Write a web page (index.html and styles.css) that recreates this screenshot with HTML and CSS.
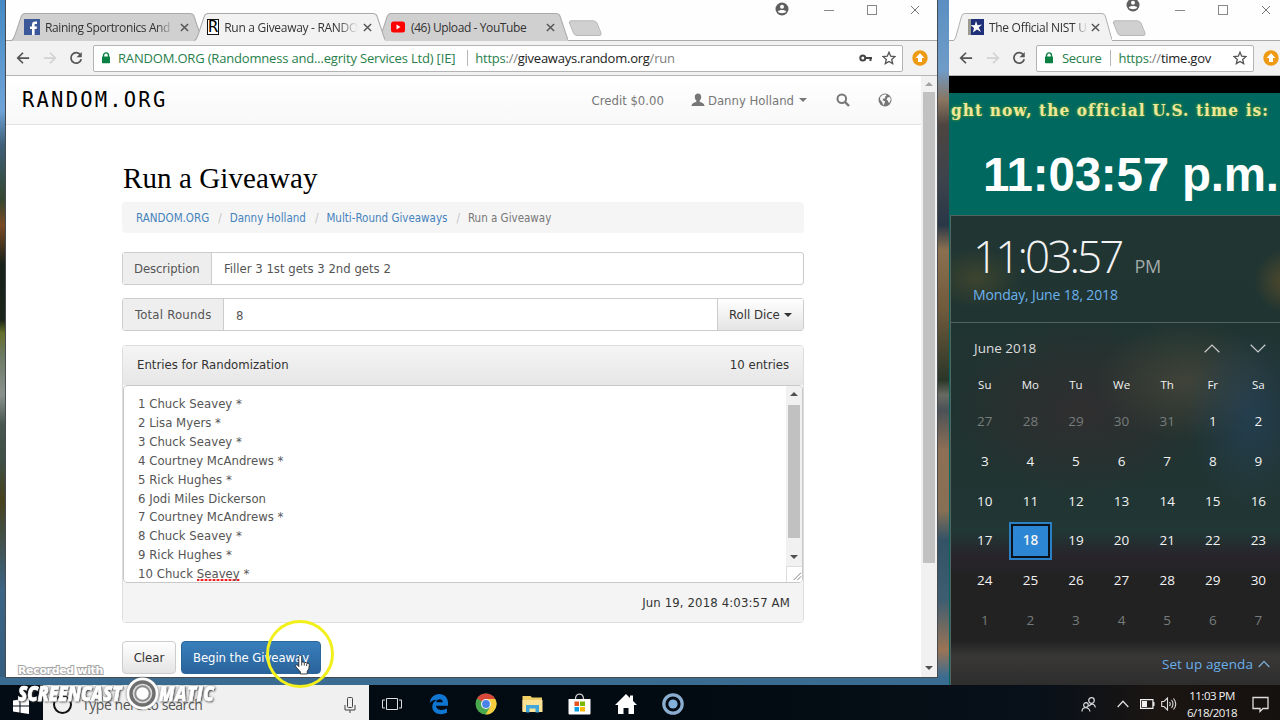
FILE: index.html
```html
<!DOCTYPE html>
<html lang="en">

<head>
    <meta charset="UTF-8">
    <title>Run a Giveaway - RANDOM.ORG</title>
    <link rel="stylesheet" href="styles.css">
</head>

<body>
    <!-- shared icons -->
    <svg class="defs">
        <symbol id="back" viewBox="0 0 16 16"><path d="M15 8H2M8 2L2 8l6 6" fill="none" stroke="currentColor" stroke-width="2"/></symbol>
        <symbol id="reload" viewBox="0 0 16 16"><path d="M13 4.2A6 6 0 1 0 14 9.5" fill="none" stroke="#555" stroke-width="2"/><path d="M14.6 1v6H8.6z" fill="#555"/></symbol>
        <symbol id="lock" viewBox="0 0 10 12"><path d="M2.5 5V3.4a2.5 2.5 0 0 1 5 0V5" fill="none" stroke="#0b8043" stroke-width="1.4"/><rect x="1" y="4.6" width="8" height="6.6" rx=".6" fill="#0b8043"/></symbol>
        <symbol id="star" viewBox="0 0 14 14"><path d="M7 1.2l1.7 4 4.3.4-3.3 2.8 1 4.2L7 10.4l-3.7 2.2 1-4.2L1 5.6l4.3-.4z" fill="none" stroke="#555" stroke-width="1.3"/></symbol>
        <symbol id="ext" viewBox="0 0 16 16"><circle cx="8" cy="8" r="7.7" fill="#ee9a12"/><path d="M8 3.3l4.5 4.8H10V12H6V8.1H3.5z" fill="#fff"/></symbol>
        <symbol id="user" viewBox="0 0 14 14"><circle cx="7" cy="7" r="6.5" fill="#5f5f5f"/><circle cx="7" cy="4.7" r="2" fill="#fff"/><path d="M2.8 9.5C4 7.5 10 7.5 11.2 9.5 10 11.8 4 11.8 2.8 9.5z" fill="#fff"/></symbol>
        <symbol id="cross" viewBox="0 0 10 10"><path d="M1 1l8 8M9 1l-8 8" fill="none" stroke="currentColor"/></symbol>
        <symbol id="min" viewBox="0 0 10 10"><path d="M0 5.5h10" stroke="#888"/></symbol>
        <symbol id="max" viewBox="0 0 10 10"><rect x=".5" y=".5" width="9" height="9" fill="none" stroke="#888"/></symbol>
        <symbol id="shape" viewBox="0 0 190 28" preserveAspectRatio="none"><path d="M0 28C2 27 3 25 4 22L10 4Q11 .5 14 .5H178Q181 .5 182 3L189 24Q190 27 191 28" stroke="#aaa"/></symbol>
        <symbol id="newtab" viewBox="0 0 34 17"><path d="M1.5 3Q1 .8 3 .8H25Q28 .8 29 3l4 10q.8 2.5-2 2.5H9Q6.5 15.5 5.5 13z" fill="#d0d0d0" stroke="#b8b8b8"/></symbol>
    </svg>

    <!-- random.org browser window -->
    <div class="window main-window">
        <div class="tabstrip">
            <div class="tab">
                <svg class="tab-shape"><use href="#shape"/></svg>
                <svg class="favicon" viewBox="0 0 16 16"><rect width="16" height="16" fill="#3b5998"/><path d="M8 16V10H6V7.5h2V5.8C8 3.5 9.2 2.5 11.2 2.5H13V5h-1.3c-.9 0-1.1.4-1.1 1.1v1.4H13L12.6 10h-2v6z" fill="#fff"/></svg>
                <span class="tab-title fade">Raining Sportronics And</span>
                <svg class="tab-close"><use href="#cross"/></svg>
            </div>
            <div class="tab active">
                <svg class="tab-shape"><use href="#shape"/></svg>
                <span class="favicon r-icon">R</span>
                <span class="tab-title fade">Run a Giveaway - RANDO</span>
                <svg class="tab-close"><use href="#cross"/></svg>
            </div>
            <div class="tab">
                <svg class="tab-shape"><use href="#shape"/></svg>
                <svg class="favicon" viewBox="0 0 16 16"><rect x="1" y="2.5" width="14" height="11" rx="2.5" fill="#f00"/><path d="M6.5 5.5v5l4-2.5z" fill="#fff"/></svg>
                <span class="tab-title">(46) Upload - YouTube</span>
                <svg class="tab-close"><use href="#cross"/></svg>
            </div>
            <svg class="new-tab"><use href="#newtab"/></svg>
            <div class="controls">
                <svg class="user-icon"><use href="#user"/></svg>
                <svg><use href="#min"/></svg>
                <svg><use href="#max"/></svg>
                <svg class="gray"><use href="#cross"/></svg>
            </div>
        </div>
        <div class="toolbar">
            <svg class="nav"><use href="#back"/></svg>
            <svg class="nav forward"><use href="#back"/></svg>
            <svg class="nav"><use href="#reload"/></svg>
            <div class="omnibox">
                <svg class="lock"><use href="#lock"/></svg>
                <span class="cert">RANDOM.ORG (Randomness and...egrity Services Ltd) [IE]</span>
                <span class="url"><b>https</b>://<i>giveaways.random.org</i>/run</span>
                <svg class="key" viewBox="0 0 14 10"><circle cx="3.8" cy="5" r="2.5" fill="none" stroke="#444" stroke-width="2"/><path d="M6.5 5H13M11.5 5v3" fill="none" stroke="#444" stroke-width="2"/></svg>
                <svg class="star"><use href="#star"/></svg>
            </div>
            <svg class="ext"><use href="#ext"/></svg>
        </div>
        <div class="viewport">
            <div class="page">
                <div class="navbar">
                    <span class="brand">RANDOM.ORG</span>
                    <span class="credit">Credit $0.00</span>
                    <svg class="person" viewBox="0 0 14 14"><path d="M7 .5c2 0 3.2 1.5 3.2 3.5 0 1.7-.7 2.8-1.5 3.5v1.3c1 .7 4.8 1.3 4.8 4.2H.5c0-2.900 3.800-3.500 4.800-4.200V7.500C4.500 6.800 3.800 5.700 3.800 4 3.800 2 5 .5 7 .5z" fill="#777"/></svg>
                    <span class="account">Danny Holland</span>
                    <span class="caret"></span>
                    <svg class="search" viewBox="0 0 14 14"><circle cx="5.8" cy="5.8" r="4.3" fill="none" stroke="#777" stroke-width="2"/><path d="M9 9l4 4" stroke="#777" stroke-width="2.4"/></svg>
                    <svg class="globe" viewBox="0 0 14 14"><circle cx="7" cy="7" r="6.5" fill="#777"/><path d="M4.5 2l3-.7 1 1.2-1.5 1.3.3 1.4-2.3.6-.4 1.5 2.4.9-.5 2-1.3 2.3-.9-3L2 6.500 2.300 4zM9.500 4.500L12 4l.8 2.500-1.300 3.300-1.300-.6-.3-1.800-1.400-.7z" fill="#f9f9f9"/></svg>
                </div>
                <div class="container">
                    <h1>Run a Giveaway</h1>
                    <div class="breadcrumb">
                        <a>RANDOM.ORG</a><a>Danny Holland</a><a>Multi-Round Giveaways</a><span>Run a Giveaway</span>
                    </div>
                    <div class="input-group">
                        <span class="addon">Description</span>
                        <span class="field">Filler 3 1st gets 3 2nd gets 2</span>
                    </div>
                    <div class="input-group rounds">
                        <span class="addon">Total Rounds</span>
                        <span class="field">8</span>
                        <span class="dice">Roll Dice <span class="caret"></span></span>
                    </div>
                    <div class="panel">
                        <div class="panel-heading"><span>Entries for Randomization</span><span>10 entries</span></div>
                        <div class="entries">
                            <div class="list">
                                <div>1 Chuck Seavey *</div>
                                <div>2 Lisa Myers *</div>
                                <div>3 Chuck Seavey *</div>
                                <div>4 Courtney McAndrews *</div>
                                <div>5 Rick Hughes *</div>
                                <div>6 Jodi Miles Dickerson</div>
                                <div>7 Courtney McAndrews *</div>
                                <div>8 Chuck Seavey *</div>
                                <div>9 Rick Hughes *</div>
                                <div>10 Chuck <span class="misspelled">Seavey</span> *</div>
                            </div>
                            <div class="entries-side">
                                <div class="scroll">
                                    <span class="arrow up"></span>
                                    <span class="thumb"></span>
                                    <span class="arrow down"></span>
                                </div>
                                <svg class="grip" viewBox="0 0 16 16"><path d="M7 14l8-8M11 14l4-4" stroke="#777"/></svg>
                            </div>
                        </div>
                        <div class="panel-footer">Jun 19, 2018 4:03:57 AM</div>
                    </div>
                    <div class="buttons">
                        <span class="btn">Clear</span>
                        <span class="btn primary">Begin the Giveaway</span>
                    </div>
                </div>
            </div>
            <div class="scroll page-scroll">
                <span class="arrow up light"></span>
                <span class="thumb"></span>
                <span class="arrow down"></span>
            </div>
        </div>
    </div>

    <!-- time.gov browser window -->
    <div class="window time-window">
        <div class="tabstrip">
            <div class="tab active">
                <svg class="tab-shape"><use href="#shape"/></svg>
                <svg class="favicon" viewBox="0 0 16 16"><rect width="16" height="16" fill="#1f2f78"/><rect width="3" height="16" fill="#9a9a90"/><path d="M8 2l1.5 4.2 4.5-.7-3.3 3 2.3 4.5-4-2.4L5 13.5l1-4.6L2.5 6l4.2.2z" fill="#fff"/></svg>
                <span class="tab-title fade">The Official NIST U</span>
                <svg class="tab-close"><use href="#cross"/></svg>
            </div>
            <svg class="new-tab"><use href="#newtab"/></svg>
            <div class="controls">
                <svg class="user-icon"><use href="#user"/></svg>
                <svg><use href="#min"/></svg>
                <svg><use href="#max"/></svg>
                <svg class="gray"><use href="#cross"/></svg>
            </div>
        </div>
        <div class="toolbar">
            <svg class="nav"><use href="#back"/></svg>
            <svg class="nav forward"><use href="#back"/></svg>
            <svg class="nav"><use href="#reload"/></svg>
            <div class="omnibox">
                <svg class="lock"><use href="#lock"/></svg>
                <span class="cert">Secure</span>
                <span class="url"><b>https</b>://<i>time.gov</i></span>
                <svg class="star"><use href="#star"/></svg>
            </div>
            <svg class="ext"><use href="#ext"/></svg>
        </div>
        <div class="official">
            <div class="official-label">ght now, the official U.S. time is:</div>
            <div class="official-time">11:03:57 p.m.</div>
        </div>
    </div>

    <!-- clock and calendar flyout -->
    <div class="flyout">
        <div class="clock">
            <div class="clock-row"><span class="clock-time">11:03:57</span><span class="clock-pm">PM</span></div>
            <div class="clock-date">Monday, June 18, 2018</div>
        </div>
        <div class="month">
            <span>June 2018</span>
            <svg viewBox="0 0 16 9"><path d="M.7 8.2L8 1l7.3 7.2" fill="none" stroke="#ccc" stroke-width="1.2"/></svg>
            <svg viewBox="0 0 16 9"><path d="M.7 .8L8 8l7.3-7.2" fill="none" stroke="#ccc" stroke-width="1.2"/></svg>
        </div>
        <div class="weekdays"><span>Su</span><span>Mo</span><span>Tu</span><span>We</span><span>Th</span><span>Fr</span><span>Sa</span></div>
        <div class="days">
            <span class="off">27</span><span class="off">28</span><span class="off">29</span><span class="off">30</span><span class="off">31</span><span>1</span><span>2</span>
            <span>3</span><span>4</span><span>5</span><span>6</span><span>7</span><span>8</span><span>9</span>
            <span>10</span><span>11</span><span>12</span><span>13</span><span>14</span><span>15</span><span>16</span>
            <span>17</span><span class="today">18</span><span>19</span><span>20</span><span>21</span><span>22</span><span>23</span>
            <span>24</span><span>25</span><span>26</span><span>27</span><span>28</span><span>29</span><span>30</span>
            <span class="off">1</span><span class="off">2</span><span class="off">3</span><span class="off">4</span><span class="off">5</span><span class="off">6</span><span class="off">7</span>
        </div>
        <div class="agenda">Set up agenda
            <svg viewBox="0 0 12 8"><path d="M.7 7L6 1.3 11.3 7" fill="none" stroke="#7fb2d8" stroke-width="1.2"/></svg>
        </div>
    </div>

    <!-- taskbar -->
    <div class="taskbar">
        <div class="start"><svg viewBox="0 0 16 16"><path d="M0 2.5L6.5 1.5v6H0zM7.5 1.3L16 0v7.5H7.5zM0 8.5h6.5v6L0 13.5zM7.5 8.5H16V16l-8.5-1.3z" fill="#fff"/></svg></div>
        <div class="searchbox">
            <span class="ring"></span>
            <span class="placeholder">Type here to search</span>
            <svg viewBox="0 0 12 18"><rect x="3.5" y="1.5" width="5" height="10" rx="1" fill="none" stroke="#444"/><path d="M1 9v5h10V9M6 14v3" fill="none" stroke="#444"/></svg>
        </div>
        <div class="apps">
            <span><svg width="20" height="16" viewBox="0 0 20 16"><path d="M4.5 2.5h11v11h-11zM3 4H.5v8H3M17 4h2.5v8H17" fill="none" stroke="#ddd"/></svg></span>
            <span><svg width="20" height="22" viewBox="0 0 20 22"><path d="M.7 10C1.5 4.5 5 1 10.3 1 15.5 1 19 4.5 19 10v2.7H7c.2 4.6 7 5.3 11 2.8v4.2c-6 3-14.7 1.4-14.7-6 0-3.3 1.8-5.7 4.7-7C4 7 2 8 .7 10zM7.2 9.3h6.5c.2-4-6-4-6.5 0z" fill="#0f76d1"/></svg></span>
            <span><svg width="22" height="22" viewBox="0 0 22 22"><circle cx="11" cy="11" r="10.5" fill="#4aa84f"/><path d="M11 11L2 5.6A10.5 10.5 0 0 1 20.2 6z" fill="#d9483b"/><path d="M11 6h9.2A10.5 10.5 0 0 1 10.5 21.5l5-8z" fill="#f8cd3d"/><circle cx="11" cy="11" r="5" fill="#f3f3f3"/><circle cx="11" cy="11" r="3.9" fill="#4a83e8"/></svg></span>
            <span><svg width="21" height="18" viewBox="0 0 21 18"><path d="M.5 1h8l1.5 1.5h10V16H.5z" fill="#f1cf67"/><path d="M.5 5h20v12H.5z" fill="#fbe294"/><path d="M4 17.5V10h13v7.5h-3.5v-4h-6v4z" fill="#3fa7dc"/></svg></span>
            <span><svg width="23" height="22" viewBox="0 0 23 22"><path d="M7.5 6C7.5-.6 15.5-.6 15.5 6" fill="none" stroke="#ccc" stroke-width="1.3"/><path d="M.5 6h22v14.5q0 1-1 1h-20q-1 0-1-1z" fill="#fff"/><path d="M6.5 8.5H11V13H6.5z" fill="#e65321"/><path d="M12 8.5h5V13h-5z" fill="#7cb704"/><path d="M6.5 14H11v4.5H6.5z" fill="#0c9fe3"/><path d="M12 14h5v4.5h-5z" fill="#fbb908"/></svg></span>
            <span><svg width="22" height="20" viewBox="0 0 22 20"><path d="M11 0l4 4V1.5h3V7l4 4h-3v9h-5.5v-6h-5v6H3v-9H0z" fill="#fff"/></svg></span>
            <span><svg width="22" height="22" viewBox="0 0 22 22"><circle cx="11" cy="11" r="9.2" fill="none" stroke="#8badd0" stroke-width="3.2"/><circle cx="11" cy="11" r="4.6" fill="#83b0da"/></svg></span>
        </div>
        <div class="tray">
            <svg width="15" height="15" viewBox="0 0 15 15"><circle cx="10.5" cy="3.5" r="2.8" fill="none" stroke="#ddd" stroke-width="1.2"/><circle cx="5" cy="8" r="2.3" fill="none" stroke="#ddd" stroke-width="1.2"/><path d="M1 14.5c0-5 7-5 8 0M8 9c3-3.5 6-1.5 6.3 1.5" fill="none" stroke="#ddd" stroke-width="1.2"/></svg>
            <svg class="up-tray" width="12" height="8" viewBox="0 0 12 8"><path d="M.7 7L6 1.3 11.3 7" fill="none" stroke="#ddd" stroke-width="1.3"/></svg>
            <svg class="battery" width="15" height="10" viewBox="0 0 15 10"><path d="M.6.6h12.3v8.8H.6z" fill="none" stroke="#eee" stroke-width="1.2"/><path d="M2 2h5v6H2zM13 3h1.5v4H13z" fill="#eee"/></svg>
            <svg class="volume" width="16" height="14" viewBox="0 0 16 14"><path d="M.7 4.5H3L6.5 1v12L3 9.5H.7zM8.5 5q1.500 2 0 4M10.500 3q3 4 0 8M12.500 1.500q4.500 5.500 0 11" fill="none" stroke="#ddd" stroke-width="1.1"/></svg>
            <div class="tray-clock">11:03 PM<br>6/18/2018</div>
            <svg width="17" height="17" viewBox="0 0 17 17"><path d="M1 1.5h15v11h-5l-3 3v-3H1z" fill="none" stroke="#ddd" stroke-width="1.3"/></svg>
        </div>
    </div>

    <!-- recorder watermark -->
    <div class="watermark">
        <div class="recorded">Recorded with</div>
        <div class="brand-row">
            <span class="word screencast">SCREENCAST</span>
            <svg viewBox="0 0 32 32"><circle cx="16" cy="16" r="15.5" fill="#fff"/><circle cx="16" cy="16" r="12.8" fill="#6f6f6f"/><circle cx="16" cy="16" r="9.5" fill="#ddd"/><circle cx="16" cy="16" r="8" fill="#8c8c8c"/><circle cx="16" cy="16" r="6" fill="#fff"/></svg>
            <span class="word matic">MATIC</span>
        </div>
    </div>

    <!-- mouse pointer -->
    <div class="click-ring"></div>
    <svg class="pointer" viewBox="0 0 16 20"><path d="M5 1.5c1.2-.8 2.2 0 2.2 1V8l1-.5 1.8.7 1.500-.2.800.9c1.500-.4 2.200.4 2.200 1.600L14 14l-1.500 2.500V19H6v-2L2 12.500C.5 10.500 2 9.500 3.500 11l1 1V2.500z" fill="#fff" stroke="#222" stroke-width=".8"/><path d="M7.200 8v3M9.700 8.500V11M12 9v2.500" stroke="#222" stroke-width=".8"/></svg>
</body>

</html>
```
FILE: styles.css
```css
* {
    box-sizing: border-box;
}

body {
    margin: 0;
    width: 1280px;
    height: 720px;
    overflow: hidden;
    position: relative;
    font-family: "Open Sans", sans-serif;
    color: #333;
    /* mountain wallpaper */
    background:
        linear-gradient(#4489c4 0, #6fa3d8 110px, #3e5f78 145px, #35472f 200px, #7a4a24 225px, #17201a 265px, #1c2519 320px, #65702a 333px, #6d7a63 355px, #8a918d 395px, #47564f 425px, #3f5046 460px, #47421c 500px, #3c6484 590px, #345d80 677px) 0 0 / 6px 677px no-repeat,
        linear-gradient(#5b8fc2 0, #6f9cc8 70px, #8a7560 100px, #4d4540 125px, #3d434c 180px, #293747 225px, #8b7050 250px, #6f5a3c 310px, #2b3628 380px, #686a62 395px, #4b5157 410px, #8d6f55 450px, #877055 510px, #345266 540px, #3e5d70 600px, #9b7455 650px, #3a6b90 677px, #39709a 720px);
}

.defs {
    display: none;
}

svg {
    flex: none;
}

/* browser windows */
.window {
    position: absolute;
    top: 0;
    background: #fff;
    overflow: hidden;
}

.main-window {
    left: 5px;
    width: 933px;
    height: 678px;
    border: solid #454b50;
    border-width: 0 1px 1px 1px;
}

.time-window {
    left: 949px;
    width: 331px;
    height: 685px;
    background: #00685e;
}

.tabstrip {
    height: 41px;
    display: flex;
    align-items: flex-end;
    padding-left: 5px;
    border-bottom: 1px solid #aaa;
    background: #fefefe;
    position: relative;
}

.tab {
    width: 191px;
    height: 28px;
    margin-right: -8px;
    margin-bottom: -1px;
    padding: 0 13px;
    display: flex;
    align-items: center;
    flex: none;
    position: relative;
    font-size: 12px;
}

.tab.active {
    z-index: 1;
}

.tab-shape {
    position: absolute;
    left: 0;
    top: 0;
    width: 100%;
    height: 28px;
    fill: #d0d0d0;
}

.active .tab-shape {
    fill: #f2f2f2;
}

.favicon {
    width: 16px;
    height: 16px;
    position: relative;
}

.r-icon {
    border: 1px solid #111;
    background: #fff;
    color: #000;
    font: 16px/13px "DejaVu Sans Mono", monospace;
    text-align: center;
}

.tab-title {
    flex: 1;
    margin-left: 5px;
    white-space: nowrap;
    position: relative;
    letter-spacing: -.4px;
}

.active .tab-title {
    letter-spacing: -.3px;
}

.fade {
    -webkit-mask-image: linear-gradient(90deg, #000 85%, transparent);
    mask-image: linear-gradient(90deg, #000 85%, transparent);
}

.tab-close {
    width: 9px;
    height: 9px;
    margin-left: 5px;
    position: relative;
    color: #555;
    stroke-width: 1.6;
}

.new-tab {
    width: 34px;
    height: 17px;
    margin: 0 0 3px 8px;
}

.controls {
    display: flex;
    gap: 33px;
    margin-left: auto;
    align-self: flex-start;
    padding: 5px 17px 0 0;
}

.controls svg {
    width: 10px;
    height: 10px;
}

.controls .user-icon {
    width: 14px;
    height: 14px;
    margin-right: 2px;
    margin-top: -3px;
}

.gray {
    color: #777;
}

.toolbar {
    height: 35px;
    display: flex;
    align-items: center;
    background: #f2f2f2;
    border-bottom: 1px solid #b5b5b5;
    padding: 0 9px 0 10px;
    color: #555;
}

.nav {
    width: 14px;
    height: 14px;
    margin-right: 12.5px;
}

.nav + .nav + .nav {
    margin-right: 10px;
}

.forward {
    transform: scaleX(-1);
    color: #d2d2d2;
}

.omnibox {
    flex: 1;
    height: 27px;
    display: flex;
    align-items: center;
    background: #fff;
    border: 1px solid #b4b4b4;
    border-radius: 2px;
    padding: 0 6px 0 7px;
    font-size: 13px;
    white-space: nowrap;
}

.lock {
    width: 10px;
    height: 12px;
    margin-right: 7px;
}

.cert {
    color: #28804c;
    padding-right: 12px;
    border-right: 1px solid #b5b5b5;
    line-height: 16px;
    letter-spacing: -.18px;
}

.url {
    flex: 1;
    margin-left: 7px;
    color: #808080;
    letter-spacing: -.24px;
}

.url b {
    font-weight: normal;
    color: #28804c;
}

.url i {
    font-style: normal;
    color: #222;
}

.key {
    width: 14px;
    height: 10px;
    margin-right: 9px;
}

.star {
    width: 14px;
    height: 14px;
}

.ext {
    width: 16px;
    height: 16px;
    margin-left: 9px;
}

.time-window .tab {
    width: 159px;
    padding: 0 12px 0 15px;
}

.time-window .tabstrip {
    padding-left: 4px;
}

.time-window .tab-close {
    margin-left: 3px;
}

.time-window .controls {
    position: absolute;
    top: 0;
    right: 9px;
    padding-right: 0;
}

.time-window .user-icon {
    margin-top: -7px;
}

.time-window .toolbar {
    padding: 0 0 0 10px;
    margin-right: -5px;
}

.time-window .omnibox {
    flex: none;
    width: 218px;
}

.time-window .lock {
    margin-right: 8px;
}

.time-window .cert {
    padding-right: 9px;
    letter-spacing: -.3px;
}

/* random.org page */
.viewport {
    height: 601px;
    display: flex;
}

.page {
    flex: 1;
    font-family: "DejaVu Sans Condensed", "DejaVu Sans", sans-serif;
    font-stretch: condensed;
    font-size: 13px;
}

.navbar {
    height: 49px;
    display: flex;
    align-items: center;
    background: linear-gradient(#fff, #f8f8f8);
    border-bottom: 1px solid #e4e4e4;
    padding: 0 29px 0 16px;
    color: #777;
}

.brand {
    flex: 1;
    color: #000;
    font: 20.5px "DejaVu Sans Mono", monospace;
    letter-spacing: 2.2px;
}

.person {
    width: 14px;
    height: 14px;
    margin: 0 3px 0 27px;
}

.caret {
    display: inline-block;
    border: 4px solid transparent;
    border-top-color: currentColor;
    border-bottom: 0;
    margin-left: 5px;
}

.search {
    width: 14px;
    height: 14px;
    margin: 0 28px 0 29px;
}

.globe {
    width: 14px;
    height: 14px;
}

.container {
    width: 682px;
    margin: 0 auto 0 116px;
}

h1 {
    margin: 0;
    height: 77px;
    font: 29px/38px "Liberation Serif", serif;
    padding: 34px 0 0 1px;
    letter-spacing: .1px;
    color: #000;
}

.breadcrumb {
    height: 31px;
    display: flex;
    align-items: center;
    background: #f5f5f5;
    border-radius: 4px;
    padding-left: 14px;
    font-size: 11.5px;
    color: #777;
}

.breadcrumb a {
    color: #4583bd;
}

.breadcrumb a::after {
    content: "/";
    color: #c4c4c4;
    margin: 0 8px 0 9px;
}

.input-group {
    height: 33px;
    margin-top: 19px;
    display: flex;
    border: 1px solid #ccc;
    border-radius: 3px;
    line-height: 31px;
    color: #555;
}

.rounds {
    margin-top: 13px;
}

.addon {
    width: 89px;
    background: #eee;
    border-right: 1px solid #ccc;
    padding-left: 11px;
    letter-spacing: -.1px;
}

.rounds .addon {
    width: 101px;
    padding-left: 12px;
    letter-spacing: .23px;
}

.field {
    flex: 1;
    padding-left: 12px;
}

.rounds .field {
    padding-top: 1px;
}

.dice {
    width: 86px;
    border-left: 1px solid #ccc;
    background: linear-gradient(#fff, #e4e4e4);
    padding-left: 11px;
    color: #333;
}

.dice .caret {
    margin-left: 0;
    vertical-align: 2px;
}

.panel {
    margin-top: 14px;
    border: 1px solid #ddd;
    border-radius: 4px;
    overflow: hidden;
}

.panel-heading {
    height: 39px;
    display: flex;
    justify-content: space-between;
    padding: 0 14px;
    line-height: 38px;
    background: linear-gradient(#f5f5f5, #e6e6e6);
}

.entries {
    height: 198px;
    display: flex;
    border: 1px solid #c8c8c8;
    border-radius: 4px;
    background: #fff;
    overflow: hidden;
}

.list {
    flex: 1;
    padding: 9px 14px 0;
    line-height: 18.9px;
    letter-spacing: .03px;
    color: #555;
}

/* spell checker squiggle */
.misspelled {
    background: repeating-linear-gradient(90deg, #e22 0 2px, #f5a5a5 2px 4px) left bottom / 100% 2px no-repeat;
}

.entries-side {
    width: 16px;
    display: flex;
    flex-direction: column;
}

.scroll {
    flex: 1;
    display: flex;
    flex-direction: column;
    align-items: center;
    background: #f1f1f1;
}

.thumb {
    width: 12px;
    height: 133px;
    background: #c1c1c1;
    margin-top: 9px;
}

.arrow {
    border: 4px solid transparent;
}

.up {
    border-top: 0;
    border-bottom-color: #505050;
    margin-top: 6px;
}

.up.light {
    border-bottom-color: #a3a3a3;
}

.down {
    border-bottom: 0;
    border-top-color: #505050;
    margin-top: auto;
    margin-bottom: 7px;
}

.grip {
    width: 16px;
    height: 16px;
    background: #fff;
    border: solid #ddd;
    border-width: 1px 0 0 1px;
}

.page-scroll {
    flex: none;
    width: 16px;
}

.page-scroll .thumb {
    height: 471px;
    margin-top: 6px;
}

.panel-footer {
    height: 39px;
    padding: 0 13px;
    line-height: 39px;
    text-align: right;
    letter-spacing: .14px;
    background: #f4f4f4;
}

.buttons {
    display: flex;
    gap: 5px;
    margin-top: 18px;
}

.btn {
    width: 54px;
    height: 33px;
    line-height: 31px;
    text-align: center;
    border: 1px solid #ccc;
    border-radius: 4px;
    background: linear-gradient(#fff, #e4e4e4);
}

.primary {
    width: 140px;
    letter-spacing: -.06px;
    border-color: #2b669a;
    background: linear-gradient(#397fbd, #2a639a);
    color: #fff;
}

/* time.gov */
.official {
    border-top: 17px solid #000;
    height: 200px;
    padding-top: 4px;
}

.official-label {
    font: bold 17px/26px "DejaVu Serif Condensed", "DejaVu Serif", serif;
    font-stretch: condensed;
    color: #efe79a;
    text-shadow: 0 0 3px #6fae2a;
    padding-left: 2px;
    white-space: nowrap;
    letter-spacing: 1.12px;
}

.official-time {
    font: bold 47.5px/56px "Liberation Sans", sans-serif;
    color: #fff;
    padding: 24px 0 0 34px;
    white-space: nowrap;
    letter-spacing: -.2px;
}

/* calendar */
.flyout {
    position: absolute;
    left: 950px;
    top: 215px;
    width: 330px;
    height: 470px;
    border: solid #50655f;
    border-width: 1px 0 0 1px;
    color: #f2f2f2;
    background:
        radial-gradient(ellipse 45px 30px at 25px 62px, #3c442e, transparent),
        radial-gradient(ellipse 32px 32px at 335px 65px, #514a2c, transparent),
        radial-gradient(ellipse 65px 90px at 300px 200px, rgba(38, 70, 100, .6), transparent),
        radial-gradient(ellipse 90px 60px at 235px 165px, rgba(80, 76, 62, .65), transparent),
        radial-gradient(ellipse 130px 90px at 130px 195px, rgba(50, 46, 48, .9), transparent),
        linear-gradient(#213633 0, #20322f 200px, #213735 315px, #28242b 340px, #222 360px, #222 425px, #393837 440px, #2e2d2d 470px);
}

.clock {
    height: 107px;
    padding: 12px 0 0 22px;
    border-bottom: 1px solid #53645f;
}

.clock-row {
    height: 57px;
    display: flex;
    align-items: baseline;
    line-height: 57px;
}

.clock-time {
    font-size: 44px;
    font-weight: 300;
    letter-spacing: -2.9px;
}

.clock-pm {
    font-size: 18px;
    color: #a3aaaa;
    margin-left: 13px;
    letter-spacing: -.2px;
}

.clock-date {
    font-size: 14px;
    line-height: 20px;
    letter-spacing: -.15px;
    color: #6cb2ed;
}

.month {
    height: 50px;
    padding: 0 14px 0 23px;
    display: flex;
    align-items: center;
    font-size: 13.5px;
    color: #ddd;
}

.month span {
    flex: 1;
}

.month svg {
    width: 16px;
    height: 9px;
}

.month svg + svg {
    margin-left: 30px;
}

.weekdays,
.days {
    display: grid;
    grid-template-columns: repeat(7, 45.6px);
    padding-left: 11px;
    text-align: center;
}

.weekdays {
    font-size: 11.5px;
    line-height: 24px;
    font-weight: 500;
}

.days {
    grid-auto-rows: 39.8px;
    margin-top: 4px;
    font-size: 13.5px;
    line-height: 40px;
}

.off {
    color: #777d7c;
}

.today {
    margin: 2px 1px 0;
    height: 38px;
    border: 2px solid #2a7fc5;
    background: #2d86d3;
    box-shadow: inset 0 0 0 2px #0b1219;
    line-height: 33px;
    font-weight: 600;
}

.agenda {
    height: 30px;
    margin-top: 9px;
    padding-right: 10px;
    display: flex;
    align-items: center;
    justify-content: flex-end;
    font-size: 13.5px;
    letter-spacing: .1px;
    color: #68aee9;
}

.agenda svg {
    width: 12px;
    height: 8px;
    margin-left: 5px;
}

/* taskbar */
.taskbar {
    position: absolute;
    left: 0;
    top: 685px;
    width: 1280px;
    height: 35px;
    display: flex;
    background: linear-gradient(90deg, #030b14 0, #020a12 700px, #081019 1040px, #1b1512 1160px, #15110f 1280px);
}

.start {
    width: 43px;
    padding: 12px 0 0 13px;
}

.start svg {
    width: 16px;
    height: 16px;
}

.searchbox {
    width: 326px;
    display: flex;
    align-items: center;
    background: #f0f0f0;
    padding: 4px 13px 0 10px;
    font-size: 14px;
    color: #555;
}

.ring {
    width: 19px;
    height: 19px;
    border: 2.5px solid #111;
    border-radius: 50%;
    margin-right: 10px;
}

.placeholder {
    flex: 1;
    letter-spacing: -.45px;
}

.searchbox svg {
    width: 12px;
    height: 18px;
}

.apps {
    display: flex;
    padding-top: 3px;
}

.apps span {
    width: 46.8px;
    display: flex;
    align-items: center;
    justify-content: center;
}

.tray {
    margin-left: auto;
    display: flex;
    align-items: center;
    padding: 3px 11px 0 0;
    color: #f2f2f2;
}

.up-tray {
    margin-left: 21px;
}

.battery {
    margin-left: 11px;
}

.volume {
    margin-left: 6px;
}

.tray-clock {
    width: 70px;
    text-align: center;
    font-size: 11.5px;
    line-height: 17px;
    letter-spacing: -.5px;
    margin: 0 5px 0 0;
}

/* watermark */
.watermark {
    position: absolute;
    left: 18px;
    top: 663px;
    color: #fff;
}

.recorded {
    font: bold 11px/15px "DejaVu Sans", sans-serif;
    letter-spacing: -.35px;
    -webkit-text-stroke: 2px #a5a5a5;
    paint-order: stroke fill;
}

.brand-row {
    display: flex;
    align-items: center;
    height: 30px;
}

.brand-row svg {
    width: 33px;
    height: 33px;
    filter: drop-shadow(0 0 1px #666);
}

.word {
    font: italic 800 17px/22px "Open Sans", sans-serif;
    -webkit-text-stroke: .6px #fff;
    text-shadow: 1px 1px 2px #333, 0 0 2px #444;
    transform: scaleY(1.25);
    white-space: nowrap;
}

.screencast {
    width: 108px;
    letter-spacing: -.1px;
}

.matic {
    width: 58px;
    letter-spacing: .5px;
}

/* pointer */
.click-ring {
    position: absolute;
    left: 266px;
    top: 620px;
    width: 68px;
    height: 68px;
    border: 3px solid #f2f01c;
    border-radius: 50%;
}

.pointer {
    position: absolute;
    left: 294px;
    top: 654px;
    width: 17px;
    height: 21px;
}
```
